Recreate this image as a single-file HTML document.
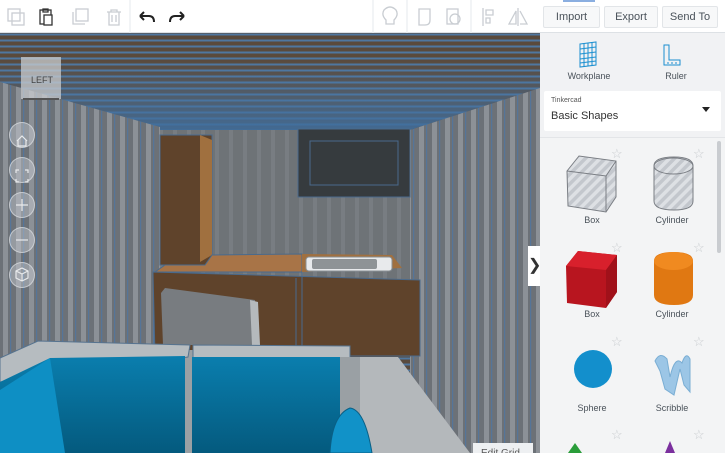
<!DOCTYPE html>
<html><head><meta charset="utf-8"><style>
*{margin:0;padding:0;box-sizing:border-box}
body{width:725px;height:453px;overflow:hidden;font-family:"Liberation Sans",sans-serif;background:#fff;position:relative}
.tb{position:absolute;left:0;top:0;width:725px;height:33px;background:#fff;border-bottom:1px solid #dde1e5}
.btn{position:absolute;top:6px;height:22px;border:1px solid #e2e5e8;border-radius:2px;background:#f7f8f9;font-size:11px;color:#4a525a;text-align:center;line-height:20px}
.panel{position:absolute;left:540px;top:33px;width:185px;height:420px;background:#f1f2f4}
.lbl{position:absolute;font-size:9px;color:#4a525a;text-align:center;width:80px}
.star{position:absolute;font-size:13px;color:#c8ccd0}
.nav{position:absolute;left:9px;width:26px;height:26px;border-radius:50%;background:rgba(200,205,210,.45);border:1px solid rgba(230,232,235,.6)}
</style></head><body>
<svg width="725" height="453" style="position:absolute;left:0;top:0">
<defs>
<pattern id="ceil" width="10" height="6" patternUnits="userSpaceOnUse"><rect width="10" height="6" fill="#5a4a3c"/><rect y="3.5" width="10" height="2" fill="#4f77a0"/></pattern>
<pattern id="wall" width="13" height="10" patternUnits="userSpaceOnUse"><rect width="13" height="10" fill="#6c7177"/><rect x="3" width="5" height="10" fill="#8c9197"/><rect x="10" width="1.2" height="10" fill="#557599"/></pattern>
<pattern id="bwall" width="14" height="10" patternUnits="userSpaceOnUse"><rect width="14" height="10" fill="#6e7377"/><rect x="5" width="4" height="10" fill="#787d82"/></pattern>
<linearGradient id="blue" x1="0" y1="0" x2="0" y2="1"><stop offset="0" stop-color="#0a7eae"/><stop offset="1" stop-color="#045a7e"/></linearGradient>
<linearGradient id="haze" x1="0" y1="0" x2="0" y2="1"><stop offset="0" stop-color="#4a78a8" stop-opacity="0"/><stop offset="1" stop-color="#3f6d9c" stop-opacity=".9"/></linearGradient>
</defs>
<rect x="0" y="33" width="540" height="420" fill="url(#ceil)"/>
<polygon points="0,60 540,60 540,88 410,130 160,130 0,82" fill="url(#haze)"/>
<polygon points="0,82 160,127 160,453 0,453" fill="url(#wall)"/>
<polygon points="410,130 540,88 540,453 410,453" fill="url(#wall)"/>
<rect x="160" y="130" width="250" height="200" fill="url(#bwall)"/>
<rect x="298" y="129" width="112" height="68" fill="#363b3e" stroke="#4a6a8c"/>
<rect x="310" y="141" width="88" height="44" fill="none" stroke="#4a6a8c"/>
<rect x="160" y="135" width="52" height="130" fill="#5f432b" stroke="#4a6a8c"/>
<polygon points="200,135 212,140 212,255 200,262" fill="#a0703f"/>
<polygon points="212,255 302,254 302,272 155,272 165,265 205,265" fill="#a87447" stroke="#4a6a8c"/>
<polygon points="302,254 392,255 402,268 302,272" fill="#a07040"/>
<rect x="306" y="257" width="86" height="14" rx="3" fill="#e8eaec" stroke="#8a9095"/>
<rect x="312" y="259" width="65" height="10" rx="2" fill="#8e9396"/>
<polygon points="153,272 420,280 420,356 155,356" fill="#5f432b" stroke="#4a6a8c"/>
<line x1="296" y1="278" x2="296" y2="355" stroke="#4a6a8c"/>
<line x1="302" y1="272" x2="302" y2="355" stroke="#4a6a8c"/>
<polygon points="161,293 165,288 255,300 257,345 163,345" fill="#787c80"/>
<polygon points="250,300 258,302 260,345 252,345" fill="#b5b9bc"/>
<polygon points="350,357 398,357 470,453 350,453" fill="#b4b8bb"/>
<rect x="184" y="350" width="10" height="103" fill="#9aa0a4"/>
<polygon points="0,358 38,341 190,345 188,357 0,382" fill="#b6bcc0" stroke="#56738f"/>
<polygon points="0,382 50,358 185,356 185,453 0,453" fill="url(#blue)"/>
<polygon points="0,390 50,358 65,453 0,453" fill="#0e8fc4"/>
<polygon points="193,345 350,346 350,358 193,358" fill="#b6bcc0" stroke="#56738f"/>
<rect x="192" y="357" width="158" height="96" fill="url(#blue)"/>
<rect x="340" y="357" width="20" height="62" fill="#9aa0a4"/>
<path d="M330,453 Q332,415 350,408 Q365,410 372,453 Z" fill="#1192c8" stroke="#0a5f85"/>
<rect x="473" y="443" width="60" height="12" fill="#eef0f2"/>
<text x="481" y="456" font-size="10" fill="#555">Edit Grid</text>
<rect x="21" y="57" width="40" height="42" fill="#c9cccf" opacity=".75"/>
<line x1="23" y1="99" x2="59" y2="99" stroke="#555" stroke-width="2"/>
<text x="31" y="83" font-size="9" fill="#444">LEFT</text>
</svg>
<div class="nav" style="top:122px"></div><div class="nav" style="top:157px"></div><div class="nav" style="top:192px"></div><div class="nav" style="top:227px"></div><div class="nav" style="top:262px"></div>
<svg width="40" height="300" style="position:absolute;left:0;top:120px" fill="none" stroke="#e8eaec" stroke-width="1.2">
<path d="M17,21 L22,16 L27,21 M18,20 V26 H26 V20"/>
<path d="M16,53 V50 H19 M25,50 H28 V53 M28,59 V62 H25 M19,62 H16 V59"/>
<path d="M22,79 V91 M16,85 H28"/>
<path d="M16,120 H28"/>
<path d="M22,148 L28,151 L28,158 L22,161 L16,158 L16,151 Z M16,151 L22,154 L28,151 M22,154 V161"/>
</svg>
<div style="position:absolute;left:528px;top:246px;width:12px;height:40px;background:#fff;font-size:16px;line-height:40px;text-align:center;color:#333">❯</div>
<div class="tb"></div>
<div style="position:absolute;left:563px;top:0;width:32px;height:2px;background:#8aaee0"></div>
<svg width="540" height="33" style="position:absolute;left:0;top:0" fill="none" stroke-width="1.3">
<g stroke="#c9cdd2"><rect x="8" y="9" width="12" height="12"/><rect x="12" y="13" width="12" height="12"/></g>
<g stroke="#333"><rect x="40" y="10" width="11" height="14"/><rect x="44" y="15" width="8" height="10" fill="#fff"/><path d="M43,9 H48 V12 H43Z"/></g>
<g stroke="#c9cdd2"><rect x="76" y="9" width="12" height="12"/><path d="M73,12 V24 H85"/></g>
<g stroke="#c9cdd2"><path d="M107,12 H121 M111,12 V10 H117 V12 M109,12 V25 H119 V12 M112,15 V22 M116,15 V22"/></g>
<path d="M140,16 H149 Q154,16 154,22 M140,16 L144,12 M140,16 L144,20" stroke="#222" stroke-width="2"/>
<path d="M184,16 H175 Q170,16 170,22 M184,16 L180,12 M184,16 L180,20" stroke="#222" stroke-width="2"/>
<g stroke="#c9cdd2"><path d="M386,20 Q381,15 384,10 Q390,4 396,10 Q399,15 394,20 V24 H386 Z"/><path d="M419,9 H430 V20 Q430,25 425,25 H419 Z"/><rect x="447" y="9" width="11" height="15"/><circle cx="455" cy="19" r="5"/><path d="M483,8 V26 M486,10 H493 V15 H486 Z M486,18 H490 V23 H486Z"/><path d="M518,8 V26 M516,24 L509,24 L516,11 Z M520,11 L527,24 H520"/></g>
<g stroke="#eceef0"><line x1="130" y1="0" x2="130" y2="33"/><line x1="373" y1="0" x2="373" y2="33"/><line x1="407" y1="0" x2="407" y2="33"/><line x1="471" y1="0" x2="471" y2="33"/></g>
</svg>
<div class="btn" style="left:543px;width:57px">Import</div>
<div class="btn" style="left:604px;width:54px">Export</div>
<div class="btn" style="left:662px;width:56px">Send To</div>
<div class="panel">
<svg width="185" height="40" style="position:absolute;left:0;top:8px">
<g stroke="#1a8fd0" fill="none" stroke-width="1"><polygon points="40,3 56,1 56,24 40,26"/><path d="M44,3 V26 M48,2 V25 M52,2 V25 M40,8 L56,6 M40,13 L56,11 M40,18 L56,16 M40,22 L56,20"/>
<path d="M124,4 V24 H140 V19 H129 V4 Z"/><path d="M128,21 V23 M132,21 V23 M136,21 V23"/></g>
</svg>
<div class="lbl" style="left:9px;top:38px">Workplane</div>
<div class="lbl" style="left:96px;top:38px">Ruler</div>
<div style="position:absolute;left:4px;top:58px;width:177px;height:40px;background:#fff;border-radius:2px"></div>
<div style="position:absolute;left:11px;top:64px;font-size:7px;color:#555">Tinkercad</div>
<div style="position:absolute;left:11px;top:77px;font-size:11px;color:#333">Basic Shapes</div>
<div style="position:absolute;left:162px;top:74px;width:0;height:0;border-left:4px solid transparent;border-right:4px solid transparent;border-top:5px solid #222"></div>
<div style="position:absolute;left:0;top:104px;width:185px;height:316px;background:#f3f4f5;border-top:1px solid #e3e5e8"></div>
<div style="position:absolute;left:177px;top:108px;width:4px;height:112px;border-radius:2px;background:#c9ccd0"></div>
<svg width="185" height="316" style="position:absolute;left:0;top:104px">
<defs><pattern id="st" width="7" height="7" patternUnits="userSpaceOnUse" patternTransform="rotate(45)"><rect width="7" height="7" fill="#c3c7cd"/><rect width="3.5" height="7" fill="#dde0e4"/></pattern></defs>
<polygon points="27,34 39,19 76,24 76,60 66,75 28,69" fill="url(#st)" stroke="#7a7e84"/>
<path d="M27,34 L66,39 L76,24 M66,39 V75" stroke="#7a7e84" fill="none"/>
<path d="M114,29 Q114,20 134,20 Q153,20 153,29 V64 Q153,73 134,73 Q114,73 114,64 Z" fill="url(#st)" stroke="#7a7e84"/>
<ellipse cx="133.5" cy="29" rx="19.5" ry="8" fill="none" stroke="#7a7e84"/>
<polygon points="26,129 38,114 77,118 77,155 66,171 27,166" fill="#b8151f"/>
<polygon points="26,129 38,114 77,118 66,133" fill="#d8202c"/>
<path d="M66,133 L77,118 V155 L66,171Z" fill="#a0111a"/>
<path d="M114,124 Q114,115 134,115 Q153,115 153,124 V158 Q153,168 134,168 Q114,168 114,158 Z" fill="#e07812"/>
<ellipse cx="133.5" cy="124" rx="19.5" ry="9" fill="#f08a20"/>
<circle cx="53" cy="232" r="19" fill="#138fcc"/>
<path d="M115,224 Q120,214 127,222 L130,240 Q135,218 142,226 Q146,214 150,222 V255 L144,248 L140,232 L134,258 L125,252 L120,234 Z" fill="#9cc6e6" stroke="#7aaed4"/>
<polygon points="28,316 35,306 42,316" fill="#2a9d3a"/>
<polygon points="125,316 130,304 135,316" fill="#7b2f9e"/>
</svg>
<div class="lbl" style="left:12px;top:182px">Box</div><div class="lbl" style="left:92px;top:182px">Cylinder</div>
<div class="lbl" style="left:12px;top:276px">Box</div><div class="lbl" style="left:92px;top:276px">Cylinder</div>
<div class="lbl" style="left:12px;top:370px">Sphere</div><div class="lbl" style="left:92px;top:370px">Scribble</div>
<div class="star" style="left:71px;top:113px">☆</div><div class="star" style="left:153px;top:113px">☆</div>
<div class="star" style="left:71px;top:207px">☆</div><div class="star" style="left:153px;top:207px">☆</div>
<div class="star" style="left:71px;top:301px">☆</div><div class="star" style="left:153px;top:301px">☆</div>
<div class="star" style="left:71px;top:394px">☆</div><div class="star" style="left:153px;top:394px">☆</div>
</div>
</body></html>
